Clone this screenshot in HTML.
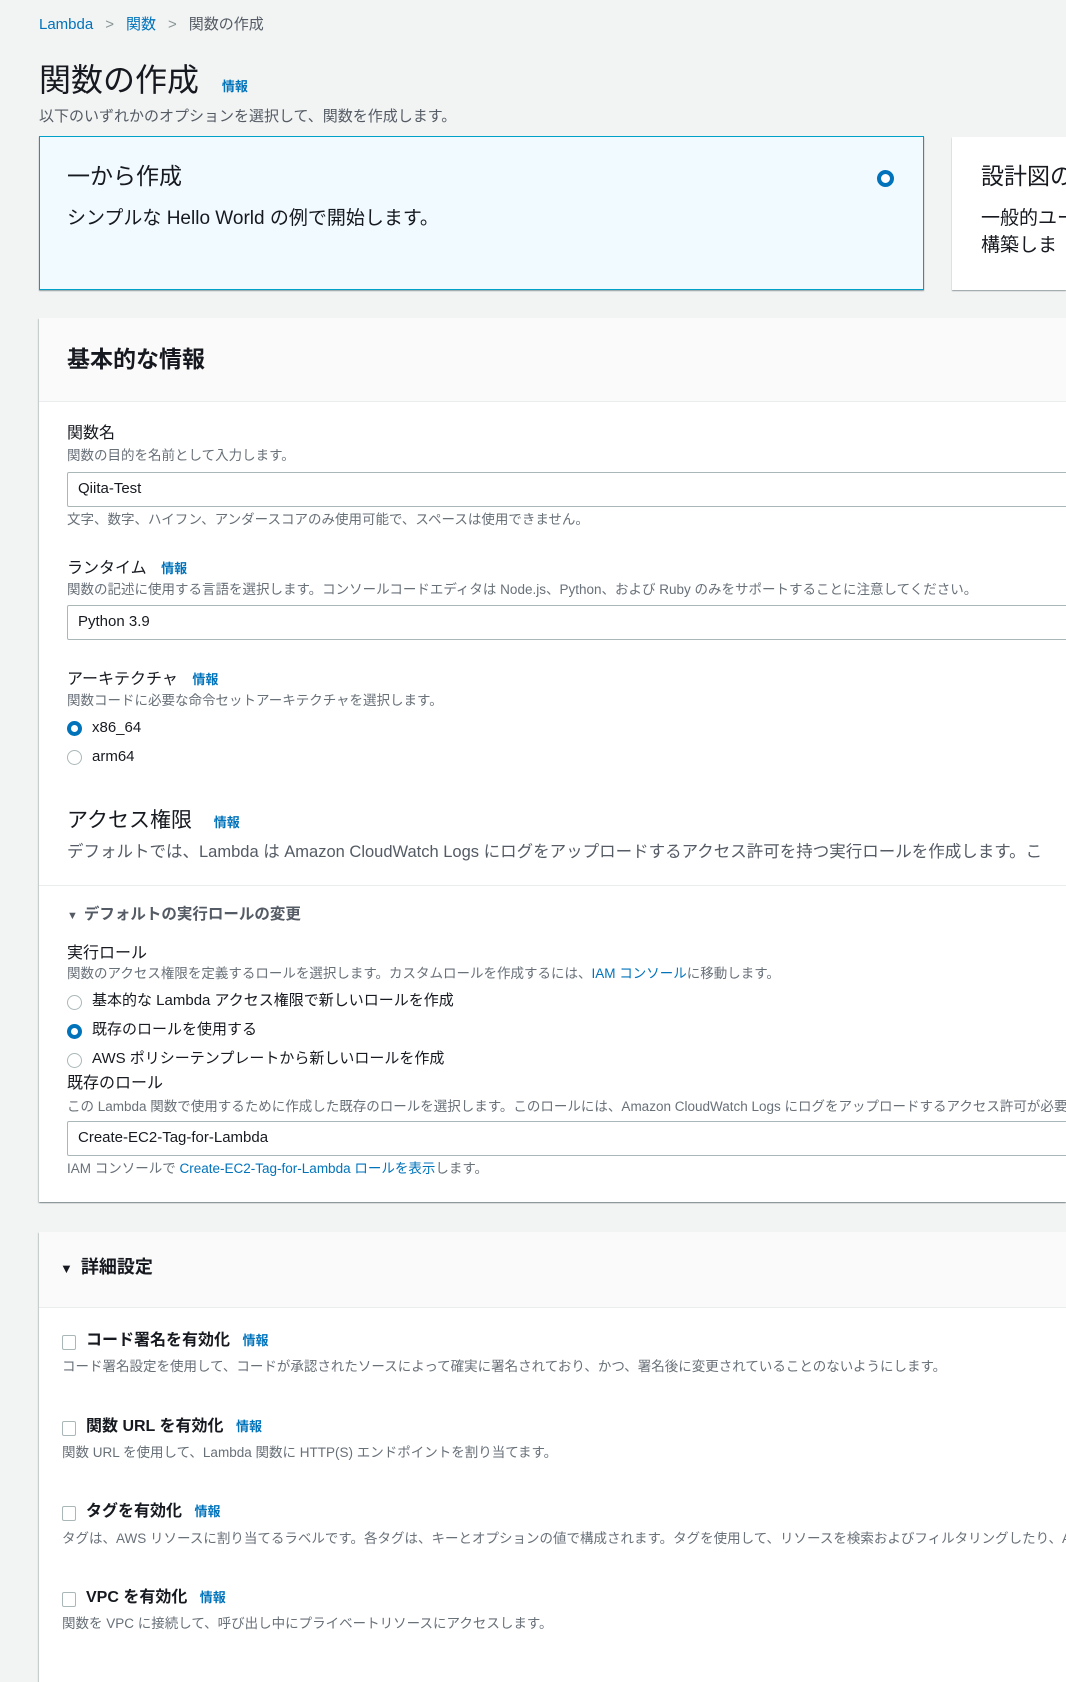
<!DOCTYPE html>
<html><head><meta charset="utf-8"><style>
*{box-sizing:border-box;margin:0;padding:0}
body{width:1066px;height:1669px;overflow:hidden;background:#f2f3f3;font-family:"Liberation Sans","Noto Sans CJK JP",sans-serif;color:#16191f;position:relative}
.a{position:absolute;white-space:nowrap;line-height:1}
.l{color:#0073bb}
.h{color:#687078;font-size:13.5px}
.lb{font-size:16px}
.inf{color:#0073bb;font-size:13px;font-weight:bold}
.panel{position:absolute;left:39px;right:0;background:#fff;box-shadow:0 1px 1px rgba(0,28,36,.3),1px 1px 1px rgba(0,28,36,.15),-1px 1px 1px rgba(0,28,36,.15)}
.ph{position:absolute;left:0;right:0;top:0;background:#fafafa;border-bottom:1px solid #eaeded}
.inp{position:absolute;left:67px;right:-5px;height:35px;border:1px solid #aab7b8;border-radius:2px;background:#fff;font-size:15px;padding:8px 10px;line-height:1}
.rad{position:absolute;width:15px;height:15px;border-radius:50%;border:1px solid #aab7b8;background:#fff}
.rad.on{border:4px solid #0073bb}
.cb{position:absolute;left:62px;width:14px;height:15px;border:1px solid #aab7b8;border-radius:2px;background:#fff}
</style></head><body>
<div class="a" style="left:39px;top:17px;font-size:15px"><span class="l">Lambda</span><span style="color:#879596;margin:0 12px">&gt;</span><span class="l">関数</span><span style="color:#879596;margin:0 12px">&gt;</span><span style="color:#545b64">関数の作成</span></div>
<div class="a" style="left:39px;top:64px;font-size:32px">関数の作成 <span class="inf" style="margin-left:14px">情報</span></div>
<div class="a" style="left:39px;top:109px;font-size:15px;color:#545b64">以下のいずれかのオプションを選択して、関数を作成します。</div>
<div style="position:absolute;left:39px;top:136px;width:885px;height:154px;background:#f1faff;border:1px solid #00a1c9;box-shadow:0 1px 1px rgba(0,28,36,.4)"></div>
<div class="a" style="left:67px;top:165px;font-size:23px">一から作成</div>
<div class="rad on" style="left:877px;top:170px;width:17px;height:17px"></div>
<div class="a" style="left:67px;top:209px;font-size:19px">シンプルな Hello World の例で開始します。</div>
<div style="position:absolute;left:952px;top:137px;right:0;height:153px;background:#fff;box-shadow:0 1px 1px rgba(0,28,36,.4)"></div>
<div class="a" style="left:981px;top:165px;font-size:23px">設計図の</div>
<div class="a" style="left:981px;top:209px;font-size:19px">一般的ユー</div>
<div class="a" style="left:981px;top:236px;font-size:19px">構築しま</div>

<div class="panel" style="top:318px;height:884px"><div class="ph" style="height:84px"></div></div>
<div class="a" style="left:67px;top:348px;font-size:23px;font-weight:bold">基本的な情報</div>
<div class="a lb" style="left:67px;top:426px">関数名</div>
<div class="a h" style="left:67px;top:449px">関数の目的を名前として入力します。</div>
<div class="inp" style="top:472px">Qiita-Test</div>
<div class="a h" style="left:67px;top:513px">文字、数字、ハイフン、アンダースコアのみ使用可能で、スペースは使用できません。</div>
<div class="a lb" style="left:67px;top:561px">ランタイム <span class="inf" style="margin-left:10px">情報</span></div>
<div class="a h" style="left:67px;top:583px">関数の記述に使用する言語を選択します。コンソールコードエディタは Node.js、Python、および Ruby のみをサポートすることに注意してください。</div>
<div class="inp" style="top:605px">Python 3.9</div>
<div class="a lb" style="left:67px;top:672px">アーキテクチャ <span class="inf" style="margin-left:10px">情報</span></div>
<div class="a h" style="left:67px;top:694px">関数コードに必要な命令セットアーキテクチャを選択します。</div>
<div class="rad on" style="left:67px;top:721px"></div><div class="a" style="left:92px;top:720px;font-size:15px">x86_64</div>
<div class="rad" style="left:67px;top:750px"></div><div class="a" style="left:92px;top:749px;font-size:15px">arm64</div>
<div class="a" style="left:67px;top:810px;font-size:21px">アクセス権限 <span class="inf" style="margin-left:16px">情報</span></div>
<div class="a" style="left:67px;top:844px;font-size:16.5px;color:#545b64">デフォルトでは、Lambda は Amazon CloudWatch Logs にログをアップロードするアクセス許可を持つ実行ロールを作成します。こ</div>
<div style="position:absolute;left:39px;right:0;top:885px;border-top:1px solid #eaeded"></div>
<div class="a" style="left:67px;top:907px;font-size:15.5px;font-weight:bold;color:#545b64"><span style="font-size:11px;margin-right:6px">▼</span>デフォルトの実行ロールの変更</div>
<div class="a lb" style="left:67px;top:946px">実行ロール</div>
<div class="a h" style="left:67px;top:967px">関数のアクセス権限を定義するロールを選択します。カスタムロールを作成するには、<span class="l">IAM コンソール</span>に移動します。</div>
<div class="rad" style="left:67px;top:995px"></div><div class="a" style="left:92px;top:993px;font-size:15px">基本的な Lambda アクセス権限で新しいロールを作成</div>
<div class="rad on" style="left:67px;top:1024px"></div><div class="a" style="left:92px;top:1022px;font-size:15px">既存のロールを使用する</div>
<div class="rad" style="left:67px;top:1053px"></div><div class="a" style="left:92px;top:1051px;font-size:15px">AWS ポリシーテンプレートから新しいロールを作成</div>
<div class="a lb" style="left:67px;top:1076px">既存のロール</div>
<div class="a h" style="left:67px;top:1100px">この Lambda 関数で使用するために作成した既存のロールを選択します。このロールには、Amazon CloudWatch Logs にログをアップロードするアクセス許可が必要</div>
<div class="inp" style="top:1121px">Create-EC2-Tag-for-Lambda</div>
<div class="a h" style="left:67px;top:1162px">IAM コンソールで <span class="l">Create-EC2-Tag-for-Lambda ロールを表示</span>します。</div>

<div class="panel" style="top:1232px;height:450px"><div class="ph" style="height:76px"></div></div>
<div class="a" style="left:60px;top:1258px;font-size:18px;font-weight:bold"><span style="font-size:13px;margin-right:8px">▼</span>詳細設定</div>

<div class="cb" style="left:62px;top:1335px"></div>
<div class="a" style="left:86px;top:1333px;font-size:16px;font-weight:bold">コード署名を有効化 <span class="inf" style="margin-left:8px">情報</span></div>
<div class="a h" style="left:62px;top:1360px">コード署名設定を使用して、コードが承認されたソースによって確実に署名されており、かつ、署名後に変更されていることのないようにします。</div>
<div class="cb" style="left:62px;top:1421px"></div>
<div class="a" style="left:86px;top:1419px;font-size:16px;font-weight:bold">関数 URL を有効化 <span class="inf" style="margin-left:8px">情報</span></div>
<div class="a h" style="left:62px;top:1446px">関数 URL を使用して、Lambda 関数に HTTP(S) エンドポイントを割り当てます。</div>
<div class="cb" style="left:62px;top:1506px"></div>
<div class="a" style="left:86px;top:1504px;font-size:16px;font-weight:bold">タグを有効化 <span class="inf" style="margin-left:8px">情報</span></div>
<div class="a h" style="left:62px;top:1532px">タグは、AWS リソースに割り当てるラベルです。各タグは、キーとオプションの値で構成されます。タグを使用して、リソースを検索およびフィルタリングしたり、AWS</div>
<div class="cb" style="left:62px;top:1592px"></div>
<div class="a" style="left:86px;top:1590px;font-size:16px;font-weight:bold">VPC を有効化 <span class="inf" style="margin-left:8px">情報</span></div>
<div class="a h" style="left:62px;top:1617px">関数を VPC に接続して、呼び出し中にプライベートリソースにアクセスします。</div>
</body></html>
